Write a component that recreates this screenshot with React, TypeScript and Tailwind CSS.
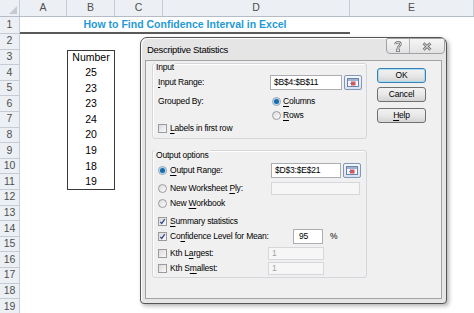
import React from "react";

const cols = [
  { id: "A", w: "w-[47px]" },
  { id: "B", w: "w-[48px]" },
  { id: "C", w: "w-[48px]" },
  { id: "D", w: "w-[187px]" },
  { id: "E", w: "flex-1" },
];

const values: Record<number, string> = {
  3: "Number",
  4: "25",
  5: "23",
  6: "23",
  7: "24",
  8: "20",
  9: "19",
  10: "18",
  11: "19",
};

function boxEdge(r: number) {
  if (r === 3) return "border-x border-t border-[#3a3a3a]";
  if (r === 11) return "border-x border-b border-[#3a3a3a]";
  if (r > 3 && r < 11) return "border-x border-[#3a3a3a]";
  return "";
}

const Radio = ({ on }: { on?: boolean }) => (
  <span className="flex h-[9px] w-[9px] shrink-0 items-center justify-center rounded-full border border-[#9a9b9c] bg-gradient-to-br from-[#dcdcdc] to-[#fbfbfb]">
    {on && <span className="h-[5px] w-[5px] rounded-full bg-[#1d6aa8] shadow-[0_0_1px_1px_#9fd3f3]" />}
  </span>
);

const Check = ({ on }: { on?: boolean }) => (
  <span className="flex h-[9px] w-[9px] shrink-0 items-center justify-center border border-[#9a9b9c] bg-gradient-to-br from-[#dadada] to-[#fafafa]">
    {on && (
      <svg viewBox="0 0 8 8" className="h-[7px] w-[7px]">
        <path d="M1.4 4.4 L3.1 6.2 L6.6 1.2" fill="none" stroke="#31478a" strokeWidth="1.4" />
      </svg>
    )}
  </span>
);

const Picker = () => (
  <div className="ml-[2px] flex h-[15px] w-[18px] items-center justify-center rounded-[2px] border border-[#8097b8] bg-gradient-to-b from-[#f4f7fb] to-[#d8e2ef]">
    <svg viewBox="0 0 12 9" className="h-[9px] w-[12px]">
      <rect x="0.5" y="0.5" width="11" height="8" fill="#f4f7fc" stroke="#6d82a8" />
      <rect x="1" y="1" width="10" height="2" fill="#9db4d6" />
      <path d="M4 3.5 L8.5 3.5 L8.5 7.5 L4 7.5 Z" fill="#d33a3a" opacity="0.85" />
      <path d="M3 5.5 L6 5.5" stroke="#6d82a8" strokeWidth="0.8" />
    </svg>
  </div>
);

const Key = ({ children }: { children: React.ReactNode }) => (
  <span className="underline decoration-[0.8px] underline-offset-[1.5px]">{children}</span>
);

const Btn = ({ children, primary }: { children: React.ReactNode; primary?: boolean }) => (
  <div
    className={
      primary
        ? "flex h-[15px] w-[49px] items-center justify-center rounded-[3px] border border-[#3c7fb1] bg-gradient-to-b from-[#f2f2f2] via-[#e8e8e8] to-[#d4d4d4] text-[8.5px] shadow-[inset_0_0_0_1px_#a6dcf5]"
        : "flex h-[15px] w-[49px] items-center justify-center rounded-[3px] border border-[#707070] bg-gradient-to-b from-[#f2f2f2] via-[#e8e8e8] to-[#d4d4d4] text-[8.5px]"
    }
  >
    {children}
  </div>
);

function Dialog() {
  return (
    <div className="absolute left-[140px] top-[37px] flex h-[267px] w-[307px] flex-col rounded-t-[7px] rounded-b-[4px] border border-[#555] bg-[#e5e5e5] px-[4px] pb-[4px] tracking-[-0.2px] text-black shadow-[inset_1px_1px_0_#ffffff,2px_2px_4px_rgba(0,0,0,0.3)]">
      {/* title bar */}
      <div className="flex h-[22px] items-start">
        <span className="ml-[2px] mt-[6px] text-[9.5px] leading-[11px] tracking-[-0.3px]">Descriptive Statistics</span>
        <div className="ml-auto mr-[-3px] flex h-[16px] w-[59px] rounded-b-[4px] rounded-t-[2px] border border-[#9ea2a7] bg-gradient-to-b from-[#f6f6f6] to-[#e2e2e2]">
          <div className="flex w-[23px] items-center justify-center border-r border-[#b0b4b9]">
            <svg viewBox="0 0 8 11" className="h-[11px] w-[8px]">
              <path d="M1.5 3.3 C1.5 0.6 6.5 0.6 6.5 3.3 C6.5 5 4 5 4 7" fill="none" stroke="#6e6e6e" strokeWidth="2.4" />
              <path d="M1.5 3.3 C1.5 0.6 6.5 0.6 6.5 3.3 C6.5 5 4 5 4 7" fill="none" stroke="#f4f4f4" strokeWidth="1" />
              <rect x="2.6" y="8" width="2.8" height="2.6" fill="#f4f4f4" stroke="#6e6e6e" strokeWidth="0.8" />
            </svg>
          </div>
          <div className="flex flex-1 items-center justify-center">
            <svg viewBox="0 0 10 9" className="h-[9px] w-[10px]">
              <path d="M1.5 1.2 L8.5 7.8 M8.5 1.2 L1.5 7.8" stroke="#6e6e6e" strokeWidth="2.6" />
              <path d="M1.5 1.2 L8.5 7.8 M8.5 1.2 L1.5 7.8" stroke="#f4f4f4" strokeWidth="1" />
            </svg>
          </div>
        </div>
      </div>

      {/* client area */}
      <div className="flex flex-1 border border-[#a3a3a3] bg-[#f0f0f0] pl-[6px] pt-[2px] text-[8.5px]">
        <div className="flex w-[215px] flex-col">
          {/* Input group */}
          <div className="flex flex-col rounded-[3px] border border-[#d3d7dc] pb-[4px] shadow-[inset_1px_1px_0_#ffffff]">
            <div className="-mt-[2px] ml-[2px] h-[10px] self-start bg-[#f0f0f0] px-[1px] leading-[10px]">Input</div>
            <div className="mt-[3px] flex h-[15px] items-center pl-[5px]">
              <span className="w-[112px]">
                <Key>I</Key>nput Range:
              </span>
              <div className="flex h-[15px] w-[72px] items-center border border-[#abadb3] bg-white px-[3px]">$B$4:$B$11</div>
              <Picker />
            </div>
            <div className="mt-[4px] flex h-[14px] items-center pl-[5px]">
              <span className="w-[114px]">Grouped By:</span>
              <Radio on />
              <span className="ml-[2px]">
                <Key>C</Key>olumns
              </span>
            </div>
            <div className="flex h-[14px] items-center pl-[119px]">
              <Radio />
              <span className="ml-[2px]">
                <Key>R</Key>ows
              </span>
            </div>
            <div className="flex h-[12px] items-center gap-[3px] pl-[5px]">
              <Check />
              <span>
                <Key>L</Key>abels in first row
              </span>
            </div>
          </div>

          {/* Output group */}
          <div className="mt-[11px] flex flex-col rounded-[3px] border border-[#d3d7dc] pb-[2px] shadow-[inset_1px_1px_0_#ffffff]">
            <div className="-mt-[1px] ml-[2px] h-[10px] self-start bg-[#f0f0f0] px-[1px] leading-[10px]">Output options</div>
            <div className="mt-[3px] flex h-[15px] items-center pl-[5px]">
              <div className="flex w-[113px] items-center gap-[3px]">
                <Radio on />
                <span>
                  <Key>O</Key>utput Range:
                </span>
              </div>
              <div className="flex h-[15px] w-[70px] items-center border border-[#abadb3] bg-white px-[3px]">$D$3:$E$21</div>
              <Picker />
            </div>
            <div className="mt-[3px] flex h-[14px] items-center pl-[5px]">
              <div className="flex w-[113px] items-center gap-[3px]">
                <Radio />
                <span>
                  New Worksheet <Key>P</Key>ly:
                </span>
              </div>
              <div className="h-[13px] w-[89px] border border-[#d5d7db] bg-[#f6f6f6]" />
            </div>
            <div className="mt-[1px] flex h-[14px] items-center gap-[3px] pl-[5px]">
              <Radio />
              <span>
                New <Key>W</Key>orkbook
              </span>
            </div>
            <div className="mt-[4px] flex h-[14px] items-center gap-[3px] pl-[5px]">
              <Check on />
              <span>
                <Key>S</Key>ummary statistics
              </span>
            </div>
            <div className="mt-[1px] flex h-[15px] items-center pl-[5px]">
              <div className="flex w-[135px] items-center gap-[3px]">
                <Check on />
                <span>
                  Co<Key>n</Key>fidence Level for Mean:
                </span>
              </div>
              <div className="flex h-[15px] w-[30px] items-center border border-[#abadb3] bg-white px-[5px]">95</div>
              <span className="ml-[7px]">%</span>
            </div>
            <div className="mt-[2px] flex h-[14px] items-center pl-[5px]">
              <div className="flex w-[110px] items-center gap-[3px]">
                <Check />
                <span>
                  Kth L<Key>a</Key>rgest:
                </span>
              </div>
              <div className="flex h-[13px] w-[56px] items-center border border-[#d5d7db] bg-[#f6f6f6] px-[3px] text-[#a3a3a3]">1</div>
            </div>
            <div className="mt-[1px] flex h-[14px] items-center pl-[5px]">
              <div className="flex w-[110px] items-center gap-[3px]">
                <Check />
                <span>
                  Kth S<Key>m</Key>allest:
                </span>
              </div>
              <div className="flex h-[13px] w-[56px] items-center border border-[#d5d7db] bg-[#f6f6f6] px-[3px] text-[#a3a3a3]">1</div>
            </div>
          </div>
        </div>

        {/* buttons */}
        <div className="ml-[10px] flex flex-col pt-[5px]">
          <Btn primary>OK</Btn>
          <div className="mt-[4px]">
            <Btn>Cancel</Btn>
          </div>
          <div className="mt-[6px]">
            <Btn>
              <Key>H</Key>elp
            </Btn>
          </div>
        </div>
      </div>
    </div>
  );
}

export default function App() {
  const rows = Array.from({ length: 19 }, (_, i) => i + 1);
  return (
    <div className="relative h-[313px] w-[474px] overflow-hidden bg-white font-['Liberation_Sans',Arial,sans-serif]">
      {/* column headers */}
      <div className="flex h-[17px] border-b border-[#b5bcc6] bg-[#eceff3]">
        <div className="relative flex w-[20px] shrink-0 items-end justify-end border-r border-[#c6ccd4] p-[2px]">
          <svg viewBox="0 0 8 8" className="h-[8px] w-[8px]">
            <path d="M8 0 L8 8 L0 8 Z" fill="#c5cad1" />
          </svg>
        </div>
        {cols.map((c) => (
          <div
            key={c.id}
            className={`${c.w} flex items-center justify-center border-r border-[#c6ccd4] text-[10.5px] text-[#4f4f4f]`}
          >
            {c.id}
          </div>
        ))}
      </div>

      {/* rows */}
      {rows.map((r) => (
        <div key={r} className={r === 1 ? "flex h-[17px]" : "flex h-[15.6px]"}>
          <div className="flex w-[20px] shrink-0 items-center justify-center border-b border-r border-[#c6ccd4] bg-[#eceff3] text-[10.5px] text-[#4f4f4f]">
            {r}
          </div>
          {r === 1 ? (
            <>
              <div className="flex w-[330px] items-center justify-center border-b-2 border-[#5a5a5a] text-[10.5px] font-bold text-[#1f9ad6]">
                How to Find Confidence Interval in Excel
              </div>
              <div className="flex-1" />
            </>
          ) : (
            <>
              <div className="w-[47px]" />
              <div className={`flex w-[48px] items-center justify-center text-[10.5px] text-black ${boxEdge(r)}`}>
                {values[r] ?? ""}
              </div>
              <div className="flex-1" />
            </>
          )}
        </div>
      ))}

      <Dialog />
    </div>
  );
}
